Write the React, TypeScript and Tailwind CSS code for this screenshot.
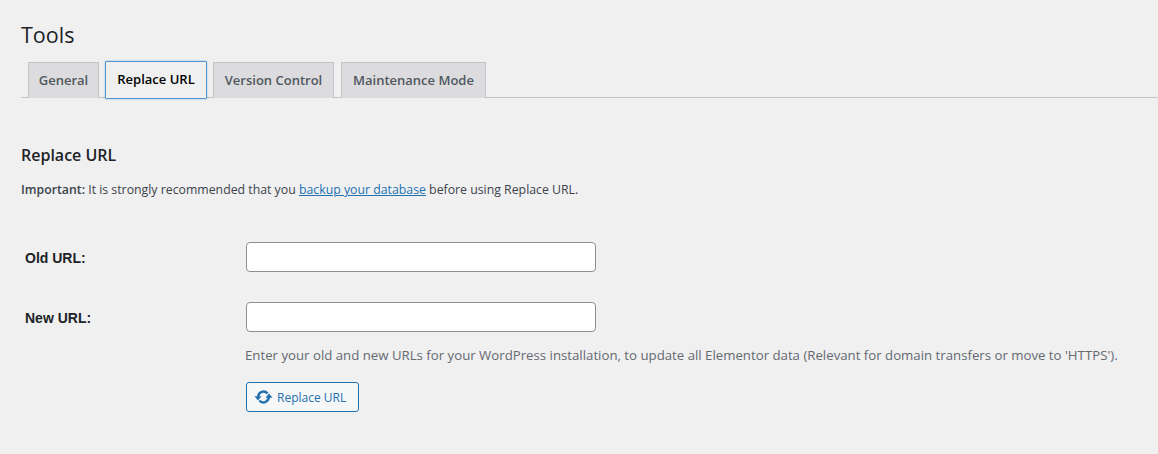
const TABS = [
  { label: 'General', width: 'w-[71px]' },
  { label: 'Replace URL', width: 'w-[102px]' },
  { label: 'Version Control', width: 'w-[121px]' },
  { label: 'Maintenance Mode', width: 'ml-px w-[145px]' },
]

function Tab({ label, width, active }: { label: string; width: string; active: boolean }) {
  if (active) {
    return (
      <div className={`z-10 -mt-px -mb-px flex h-[38px] items-center justify-center rounded-[1px] border border-[#4f94d4] bg-[#f0f0f1] text-[13px] font-semibold text-black shadow-[0_0_2px_rgba(79,148,212,0.6)] ${width}`}>
        {label}
      </div>
    )
  }
  return (
    <div className={`flex h-[36px] items-center justify-center border border-b-0 border-[#c3c4c7] bg-[#dcdcde] text-[13px] font-semibold text-[#50575e] ${width}`}>
      {label}
    </div>
  )
}

function UrlRow({ label }: { label: string }) {
  return (
    <div className="flex items-center">
      <label className="w-[225px] pt-[2px] pl-[4px] font-['Liberation_Sans',sans-serif] text-[14px] font-bold text-[#1d2327]">
        {label}
      </label>
      <input
        type="text"
        className="h-[30px] w-[350px] rounded-[4px] border border-[#8c8f94] bg-white"
      />
    </div>
  )
}

/** Two-arrow refresh mark, wider than tall as in the reference. */
function RefreshIcon() {
  return (
    <svg viewBox="0 0 19 14" className="h-[14px] w-[19px]" aria-hidden="true">
      <path d="M4.2 7A5.3 5.3 0 0 1 13.6 3.6" fill="none" stroke="currentColor" strokeWidth="2.4" />
      <path d="M14.8 7A5.3 5.3 0 0 1 5.4 10.4" fill="none" stroke="currentColor" strokeWidth="2.4" />
      <path d="M0.5 6.2H7.5L4 10.4Z" fill="currentColor" />
      <path d="M11.5 7.8H18.5L15 3.6Z" fill="currentColor" />
    </svg>
  )
}

export default function App() {
  return (
    <div className="h-[454px] w-[1158px] overflow-hidden bg-[#f0f0f1] pl-[21px] font-['Open_Sans',sans-serif] text-[#3c434a]">
      <h1 className="pt-[20px] text-[21.5px] leading-[30px] font-normal text-[#1d2327]">Tools</h1>
      <div className="mt-[12px] flex h-[36px] gap-[6px] border-b border-[#c3c4c7] pl-[7px]">
        {TABS.map((tab) => (
          <Tab key={tab.label} label={tab.label} width={tab.width} active={tab.label === 'Replace URL'} />
        ))}
      </div>

      <h2 className="mt-[47px] text-[16px] leading-[20px] font-semibold text-[#1d2327]">Replace URL</h2>
      <p className="mt-[16px] text-[12.3px] leading-[18px]">
        <strong className="font-semibold">Important:</strong> It is strongly recommended that you{' '}
        <a className="text-[#2271b1] underline">backup your database</a> before using Replace URL.
      </p>

      <div className="mt-[43px] flex flex-col gap-[30px]">
        <UrlRow label="Old URL:" />
        <UrlRow label="New URL:" />
      </div>

      <div className="pl-[224px]">
        <p className="mt-[14px] text-[13.23px] leading-[18px] whitespace-nowrap text-[#646970]">
          Enter your old and new URLs for your WordPress installation, to update all Elementor data (Relevant for domain transfers or move to 'HTTPS').
        </p>
        <button className="mt-[18px] ml-px flex h-[30px] w-[113px] items-center gap-[4px] rounded-[3px] border border-[#2271b1] bg-[#f6f7f7] pl-[7px] text-[12px] text-[#2271b1]">
          <RefreshIcon />
          <span className="pt-[2px]">Replace URL</span>
        </button>
      </div>
    </div>
  )
}
